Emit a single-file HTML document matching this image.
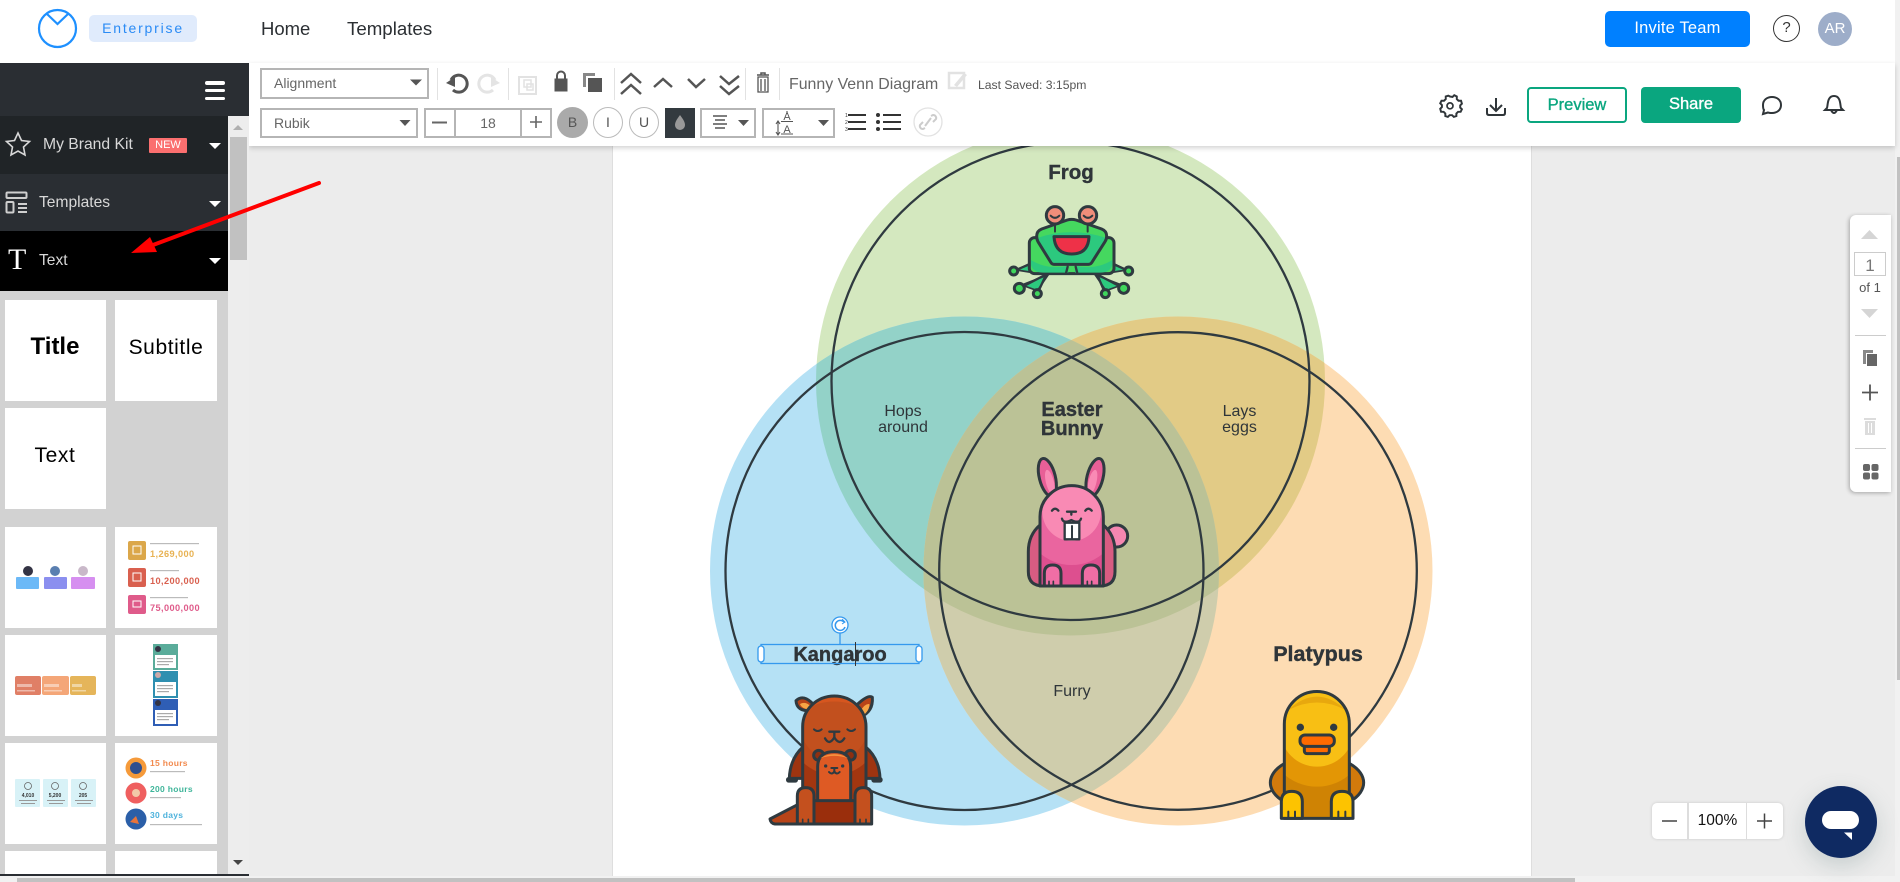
<!DOCTYPE html>
<html><head><meta charset="utf-8"><style>
*{box-sizing:border-box}
html,body{margin:0;padding:0;width:1900px;height:882px;overflow:hidden;background:#ececec;font-family:"Liberation Sans",sans-serif}
.a{position:absolute}
.sel{position:absolute;border:2px solid #b5b5b5;background:#fff;color:#666;font-size:14px}
.t{position:absolute;white-space:nowrap}
</style></head><body>
<div class="a" style="left:612px;top:146px;width:920px;height:730px;background:#fff;border-left:1px solid #dedede;border-right:1px solid #dedede"></div>

<svg class="a" style="left:0;top:0" width="1900" height="882" viewBox="0 0 1900 882" font-family="Liberation Sans">
<defs>
<clipPath id="bun"><path d="M120,438V230A95,93 0 0 1 310,230V438Z"/></clipPath>
<clipPath id="kan"><path d="M188,580V350A95,92 0 0 1 378,350V580Z"/></clipPath>
<clipPath id="pla"><path d="M133,565V282A97,97 0 0 1 328,282V565Z"/></clipPath>
<clipPath id="frg"><path d="M185,237L262,210Q275,206 288,210L365,237Q380,243 380,258Q380,268 375,275L335,338Q332,343 325,343H222Q216,343 213,338L174,275Q170,268 170,258Q170,243 185,237Z"/></clipPath>
<clipPath id="cg"><circle cx="1070.5" cy="381" r="254.500"/></clipPath>
<clipPath id="cb"><circle cx="964.5" cy="571" r="254.500"/></clipPath>
<clipPath id="co"><circle cx="1178" cy="571" r="254.500"/></clipPath>
</defs>
<circle cx="1070.5" cy="381" r="254.500" fill="#d4e8bf"/>
<circle cx="964.5" cy="571" r="254.500" fill="#b5e1f5"/>
<circle cx="1178" cy="571" r="254.500" fill="#fddcb3"/>
<circle cx="964.5" cy="571" r="254.500" fill="#93d2c8" clip-path="url(#cg)"/>
<circle cx="1178" cy="571" r="254.500" fill="#e2cb86" clip-path="url(#cg)"/>
<circle cx="1178" cy="571" r="254.500" fill="#cfcdac" clip-path="url(#cb)"/>
<g clip-path="url(#cg)"><circle cx="964.5" cy="571" r="254.500" fill="#bbc296" clip-path="url(#co)"/></g>
<g fill="none" stroke="#2f3a40" stroke-width="2.300">
<circle cx="1070.5" cy="381" r="239"/><circle cx="964.5" cy="571" r="239"/><circle cx="1178" cy="571" r="238.800"/>
</g>
<g fill="#2f3539" text-anchor="middle">
<g stroke="#2f3539" stroke-width=".4">
<text x="1071" y="179" font-size="20.5" font-weight="700">Frog</text>
<text x="1072" y="416" font-size="20" font-weight="700">Easter</text>
<text x="1072" y="435" font-size="20" font-weight="700">Bunny</text>
<text x="840" y="661" font-size="20" font-weight="700">Kangaroo</text>
<text x="1318" y="661" font-size="21.500" font-weight="700">Platypus</text>
</g>
<text x="903" y="416" font-size="16">Hops</text><text x="903" y="432" font-size="16">around</text>
<text x="1239.5" y="416" font-size="16">Lays</text><text x="1239.5" y="432" font-size="16">eggs</text>
<text x="1072" y="696" font-size="16">Furry</text>
</g>
<g fill="#fff" stroke="#3499ee" stroke-width="1.3">
<rect x="761" y="644.5" width="158" height="19" fill="none"/>
<path d="M840,633V644" fill="none"/>
<rect x="758" y="646" width="6" height="16" rx="3"/><rect x="916" y="646" width="6" height="16" rx="3"/>
<circle cx="840" cy="625" r="8"/>
<path d="M844,622A5,5 0 1 0 845,627" fill="none" stroke-width="1.5"/><path d="M842,619L845,622L842,624" fill="none" stroke-width="1"/>
</g>
<path d="M855.5,642V666" stroke="#333" stroke-width="1"/>

<!-- Frog -->
<g transform="translate(980 150) scale(.33333)" stroke="#2f3a40" stroke-width="9" stroke-linejoin="round" stroke-linecap="round">
<path d="M205,374L125,405L172,422ZM345,374L425,405L378,422Z" fill="#2cc97e" stroke-width="5"/>
<path d="M155,338L110,360L185,372ZM395,338L440,360L365,372Z" fill="#2cc97e" stroke-width="5"/>
<path d="M155,340L101,363M195,375L118,415M198,375L172,431M352,375L376,431M355,375L431,415M395,340L446,363" fill="none" stroke-width="7"/>
<circle cx="101" cy="363" r="12" fill="#3fd65c"/><circle cx="118" cy="415" r="15" fill="#3fd65c"/><circle cx="172" cy="431" r="12" fill="#3fd65c"/><circle cx="376" cy="431" r="12" fill="#3fd65c"/><circle cx="431" cy="415" r="15" fill="#3fd65c"/><circle cx="446" cy="363" r="12" fill="#3fd65c"/>
<rect x="148" y="263" width="254" height="108" rx="16" fill="#45d85f"/>
<path d="M153,330Q200,360 265,348V368H190Q160,368 153,345ZM397,330Q350,360 285,348V368H360Q390,368 397,345Z" fill="#2cc97e" stroke="none"/>
<path d="M263,350L258,370M287,350L292,370" fill="none" stroke-width="7"/>
<g clip-path="url(#frg)" stroke="none"><rect x="160" y="200" width="230" height="150" fill="#2cc97e"/><path d="M160,200H390V268Q275,225 160,268Z" fill="#45d85f"/></g>
<path d="M185,237L262,210Q275,206 288,210L365,237Q380,243 380,258Q380,268 375,275L335,338Q332,343 325,343H222Q216,343 213,338L174,275Q170,268 170,258Q170,243 185,237Z" fill="none"/>
<circle cx="225" cy="196" r="26" fill="#f08d7a"/><circle cx="324" cy="196" r="26" fill="#f08d7a"/>
<path d="M212,197Q225,210 238,197M311,197Q324,210 337,197" fill="none" stroke-width="6"/>
<path d="M225,226V245M323,226V245" fill="none" stroke-width="6"/>
<path d="M222,260H327Q325,312 275,312Q225,312 222,260Z" fill="#ee3148"/>
</g>

<!-- Bunny -->
<g transform="translate(1000 440) scale(.33333)" stroke="#2f3a40" stroke-width="9" stroke-linejoin="round" stroke-linecap="round">
<g transform="rotate(-14 142 112)"><ellipse cx="142" cy="112" rx="24" ry="58" fill="#e85f97"/><ellipse cx="146" cy="128" rx="12" ry="38" fill="#f98ab5" stroke="none"/></g>
<g transform="rotate(14 285 112)"><ellipse cx="285" cy="112" rx="24" ry="58" fill="#e85f97"/><ellipse cx="281" cy="128" rx="12" ry="38" fill="#f98ab5" stroke="none"/></g>
<circle cx="350" cy="288" r="33" fill="#f587b1"/>
<path d="M120,255Q85,285 85,335V395Q85,438 130,438H300Q345,438 345,395V335Q345,285 310,255Z" fill="#d85c82"/>
<g clip-path="url(#bun)" stroke="none"><rect x="100" y="130" width="230" height="320" fill="#dd4f8f"/><circle cx="215" cy="230" r="145" fill="#ea659f"/><circle cx="215" cy="215" r="88" fill="#f98ab4"/></g>
<path d="M120,438V230A95,93 0 0 1 310,230V438Z" fill="none"/>
<path d="M133,438V400Q133,375 158,375Q183,375 183,400V438Z" fill="#f06ea5"/><path d="M247,438V400Q247,375 273,375Q299,375 299,400V438Z" fill="#f06ea5"/>
<path d="M147,424V436M160,424V436M262,424V436M275,424V436" fill="none" stroke-width="5"/>
<path d="M156,212Q165,200 175,212M256,212Q265,200 275,212M201,215H228M214,215V224M186,236Q190,252 214,240Q238,252 243,236" fill="none" stroke-width="7"/>
<rect x="194" y="248" width="44" height="50" fill="#fff" stroke-width="7"/><path d="M216,258V298" stroke-width="6"/>
</g>

<!-- Kangaroo -->
<g transform="translate(740 610) scale(.33333)" stroke="#2f3a40" stroke-width="9" stroke-linejoin="round" stroke-linecap="round">
<path d="M90,627L175,583L235,642H105Q92,640 90,627Z" fill="#b84418"/>
<path d="M190,410Q150,445 148,505H192ZM376,410Q418,445 420,505H376Z" fill="#9e3410"/>
<rect x="140" y="503" width="32" height="13" rx="6" fill="#2f3a40" stroke-width="4"/><rect x="396" y="503" width="30" height="13" rx="6" fill="#2f3a40" stroke-width="4"/>
<path d="M212,302Q170,305 168,272Q190,250 222,285Z" fill="#b84418"/>
<path d="M212,300Q184,296 180,282Q198,272 215,292Z" fill="#f7a545" stroke="none"/>
<path d="M350,285Q385,252 397,262Q400,305 362,320Z" fill="#b84418"/>
<path d="M360,305Q374,280 388,282Q390,300 368,318Z" fill="#f7a545" stroke="none"/>
<g clip-path="url(#kan)" stroke="none"><rect x="180" y="250" width="205" height="340" fill="#a23610"/><circle cx="283" cy="360" r="135" fill="#bc4a1b"/><circle cx="283" cy="350" r="100" fill="#c2501e"/><path d="M188,345A95,92 0 0 1 378,345V300H188Z" fill="#c2501e"/><path d="M200,300A95,70 0 0 1 366,300A95,50 0 0 0 200,300Z" fill="#d6561f"/></g>
<path d="M188,580V350A95,92 0 0 1 378,350V580Z" fill="none"/>
<path d="M222,358Q233,368 245,358M322,358Q334,368 345,358" fill="none" stroke-width="6"/>
<path d="M268,365H298M283,365V382M255,385Q268,408 283,382Q298,408 313,385" fill="none" stroke-width="7"/>
<circle cx="236" cy="436" r="15" fill="#8f2f10"/><circle cx="331" cy="436" r="15" fill="#8f2f10"/>
<path d="M233,575V470Q233,425 283,425Q332,425 332,470V575Z" fill="#de5a24"/>
<path d="M240,445Q283,420 325,445Q283,430 240,445Z" fill="#f6923f" stroke="none"/>
<circle cx="257" cy="468" r="5" fill="#2f3a40" stroke="none"/><circle cx="308" cy="468" r="5" fill="#2f3a40" stroke="none"/>
<path d="M274,474H292M283,474V484M267,486Q276,496 283,484Q290,496 299,486" fill="none" stroke-width="6"/>
<rect x="222" y="572" width="123" height="70" fill="#9a2e0c"/>
<path d="M172,642V558Q172,533 197,533Q222,533 222,558V642Z" fill="#c4501e"/>
<path d="M345,642V558Q345,533 370,533Q395,533 395,558V642Z" fill="#c4501e"/>
<path d="M188,628V640M205,628V640M360,628V640M378,628V640" fill="none" stroke-width="5"/>
</g>

<!-- Platypus -->
<g transform="translate(1240 630) scale(.33333)" stroke="#2f3a40" stroke-width="9" stroke-linejoin="round" stroke-linecap="round">
<ellipse cx="231" cy="458" rx="140" ry="80" fill="#d27a0c"/>
<g clip-path="url(#pla)" stroke="none"><rect x="125" y="180" width="210" height="390" fill="#cf8304"/><circle cx="231" cy="320" r="150" fill="#e39605"/><circle cx="231" cy="300" r="110" fill="#f8bf14"/><path d="M125,180H335V300L125,300Z" fill="#f8bf14"/><path d="M145,240Q231,160 317,240Q231,195 145,240Z" fill="#e8a80e"/></g>
<path d="M133,565V282A97,97 0 0 1 328,282V565Z" fill="none"/>
<circle cx="181" cy="292" r="11" fill="#2f3a40" stroke="none"/><circle cx="281" cy="292" r="11" fill="#2f3a40" stroke="none"/>
<rect x="193" y="345" width="75" height="26" rx="8" fill="#ff6a00"/>
<rect x="180" y="315" width="103" height="34" rx="15" fill="#ff6a00"/>
<path d="M124,565V515Q124,484 155,484Q187,484 187,515V565Z" fill="#fdc300"/>
<path d="M274,565V515Q274,484 306,484Q339,484 339,515V565Z" fill="#fdc300"/>
<path d="M145,545V563M165,545V563M295,545V563M316,545V563" fill="none" stroke-width="6"/>
</g>
</svg>

<!-- Top nav -->
<div class="a" style="left:0;top:0;width:1895px;height:63px;background:#fff;box-shadow:0 1px 3px rgba(0,0,0,.1)"></div>
<div class="a" style="left:1895px;top:0;width:5px;height:882px;background:#f1f1f1"></div>
<div class="a" style="left:1897px;top:157px;width:3px;height:523px;background:#c1c1c1"></div>
<svg class="a" style="left:35px;top:8px" width="46" height="42" viewBox="35 8 46 42"><circle cx="57.5" cy="28.5" r="18.5" fill="none" stroke="#1e90ff" stroke-width="2.2"/><path d="M47,14L57.5,24L68,14" fill="none" stroke="#1e90ff" stroke-width="2.2"/></svg>
<div class="a" style="left:89px;top:15px;width:108px;height:27px;background:#e0ebfc;border-radius:5px;color:#2a8bf5;font-size:14px;line-height:27px;text-align:center;letter-spacing:1.8px">Enterprise</div>
<div class="t" style="left:261px;top:18px;font-size:18.5px;color:#2b2f33">Home</div>
<div class="t" style="left:347px;top:18px;font-size:18.700px;color:#2b2f33">Templates</div>
<div class="a" style="left:1605px;top:11px;width:145px;height:36px;background:#0080ff;border-radius:5px;color:#fff;font-size:16.500px;letter-spacing:.2px;line-height:35px;text-align:center">Invite Team</div>
<div class="a" style="left:1773px;top:15px;width:27px;height:27px;border:1.5px solid #333;border-radius:50%;text-align:center;font-size:15px;line-height:24px;color:#333">?</div>
<div class="a" style="left:1818px;top:12px;width:34px;height:34px;background:#9dadc9;border-radius:50%;text-align:center;font-size:15px;line-height:34px;color:#fff">AR</div>

<!-- Toolbar -->
<div class="a" style="left:249px;top:63px;width:1646px;height:83px;background:#fff;box-shadow:0 2px 5px rgba(0,0,0,.18)"></div>
<div class="sel" style="left:260px;top:68px;width:169px;height:31px;line-height:27px;padding-left:12px">Alignment</div>
<div class="sel" style="left:260px;top:108px;width:158px;height:30px;line-height:26px;padding-left:12px">Rubik</div>
<div class="sel" style="left:424px;top:108px;width:128px;height:30px;line-height:26px;text-align:center">18</div>
<div class="a" style="left:454px;top:108px;width:2px;height:30px;background:#b5b5b5"></div>
<div class="a" style="left:520px;top:108px;width:2px;height:30px;background:#b5b5b5"></div>
<div class="a" style="left:557px;top:107px;width:31px;height:31px;border-radius:50%;background:#aaa;color:#555;font-size:14px;line-height:31px;text-align:center">B</div>
<div class="a" style="left:593px;top:107px;width:30px;height:31px;border-radius:50%;border:1.5px solid #bbb;background:#fff;color:#555;font-size:14px;line-height:28px;text-align:center">I</div>
<div class="a" style="left:629px;top:107px;width:30px;height:31px;border-radius:50%;border:1.5px solid #bbb;background:#fff;color:#555;font-size:14px;line-height:28px;text-align:center">U</div>
<div class="a" style="left:665px;top:108px;width:30px;height:30px;background:#333a3f"></div>
<div class="sel" style="left:700px;top:108px;width:56px;height:30px"></div>
<div class="sel" style="left:762px;top:108px;width:73px;height:30px"></div>
<div class="t" style="left:789px;top:76px;font-size:15.9px;color:#666">Funny Venn Diagram</div>
<div class="t" style="left:978px;top:78px;font-size:12.2px;color:#555">Last Saved: 3:15pm</div>
<svg class="a" style="left:249px;top:63px" width="720" height="83" viewBox="249 63 720 83" fill="#666" font-family="Liberation Sans">
<g stroke="#e2e2e2" stroke-width="1"><path d="M437.5,68V100M508.5,68V100M614.5,68V100M745.5,68V100M779.5,68V100"/></g>
<path d="M410,79.500h12l-6,6z" fill="#555"/>
<path d="M399.500,120h11l-5.500,6z" fill="#555"/>
<path d="M432,122.500h15" stroke="#666" stroke-width="2" fill="none"/>
<path d="M530,122h12M536,116v12" stroke="#666" stroke-width="1.600" fill="none"/>
<path d="M818,120h11l-5.500,6z" fill="#555"/>
<path d="M738,120h11l-5.500,6z" fill="#555"/>
<path d="M713,116h14M715,120h10M713,124h14M715,128h10" stroke="#555" stroke-width="1.500" fill="none"/>
<g transform="translate(0 -2)"><path d="M451,82A8.500,8.500 0 1 1 453,92" fill="none" stroke="#555" stroke-width="3"/><path d="M446,85l9,-6v10z" fill="#555"/></g>
<g transform="translate(0 -2)"><path d="M495,82A8.500,8.500 0 1 0 493,92" fill="none" stroke="#e4e4e4" stroke-width="3"/><path d="M500,85l-9,-6v10z" fill="#e4e4e4"/></g>
<rect x="519" y="77" width="17" height="17" fill="none" stroke="#e2e2e2" stroke-width="2"/><rect x="524" y="80" width="7" height="7" fill="none" stroke="#e2e2e2" stroke-width="1.500"/><rect x="527" y="84" width="6" height="6" fill="none" stroke="#e2e2e2" stroke-width="1.500"/>
<g transform="translate(0 1.500)"><path d="M557,78v-4a4,4 0 0 1 8,0v4" fill="none" stroke="#555" stroke-width="2"/><rect x="554.500" y="77" width="13" height="13" fill="#555"/></g>
<path d="M583,73h12v3h-9v11h-3z" fill="#888"/><rect x="588" y="78" width="14" height="14" fill="#555"/>
<g fill="none" stroke="#555" stroke-width="2.500" transform="translate(0 2)"><path d="M621,81l10,-9l10,9M621,92l10,-9l10,9M654,85l9,-8l9,8M688,77l8,8l9,-8M720,74l9,8l10,-8M720,84l9,8l10,-8"/></g>
<path d="M757,75h12M761,75v-2h4v2" stroke="#555" stroke-width="1.500" fill="none"/><path d="M758,77h10v15h-10zM761,79v12M765,79v12" stroke="#555" stroke-width="1.300" fill="none"/>
<rect x="949" y="73" width="15" height="15" fill="none" stroke="#e2e2e2" stroke-width="2.500"/><path d="M954,85l10,-12l3,2l-10,12z" fill="#e2e2e2"/>
</svg>
<svg class="a" style="left:650px;top:100px" width="300" height="44" viewBox="650 100 300 44" font-family="Liberation Sans">
<path d="M680,115c3,4 5,7 5,10a5,5 0 0 1 -10,0c0,-3 2,-6 5,-10z" fill="#999"/>
<g fill="#555" font-size="11" text-anchor="middle"><text x="787" y="120">A</text><text x="787" y="133">A</text></g>
<g stroke="#555" fill="none" stroke-width="1.100"><path d="M781,121.500H793M781,134H793M787,111V114"/><path d="M778,122V134M776,124L778,121L780,124M776,132L778,135L780,132"/></g>
<g stroke="#333" stroke-width="2"><path d="M848,115H866M848,122H866M848,129H866M883,115H901M883,122H901M883,129H901"/></g>
<g fill="#333"><circle cx="878" cy="115" r="2"/><circle cx="878" cy="122" r="2"/><circle cx="878" cy="129" r="2"/></g>
<g fill="#333" font-size="5"><text x="845" y="117">1</text><text x="845" y="124">2</text><text x="845" y="131">3</text></g>
<circle cx="928" cy="122" r="14" fill="#fff" stroke="#e2e2e2" stroke-width="1.300"/>
<path d="M925,128l-2,1a3,3 0 0 1 -3,-4l3,-3M931,116l2,-1a3,3 0 0 1 3,4l-3,3M925,126l6,-8" fill="none" stroke="#ccc" stroke-width="2"/>
</svg>
<svg class="a" style="left:1430px;top:85px" width="420" height="45" viewBox="1430 85 420 45" fill="none" stroke="#2f3539" stroke-width="2">
<g transform="translate(1450 105) scale(.85) translate(-1450 -105)"><circle cx="1450" cy="106" r="3.500"/><path d="M1450,96.500l3,.5l2,-2l3,1.500l0,3l2,2l3,0l1,3.500l-2,2l0,2.500l2,2l-1.500,3l-3,0l-2,2l0,3l-3,1l-2,-2l-3,0l-2,2l-3,-1l0,-3l-2,-2l-3,0l-1,-3.500l2,-2l0,-2.500l-2,-2l1.500,-3l3,0l2,-2l0,-3l3,-1z" transform="translate(0 -1.500)" stroke-width="2.300"/></g>
<path d="M1496,98V111M1490,105l6,6l6,-6M1487,108v5q0,2 2,2h14q2,0 2,-2v-5"/>
<path d="M1772,97c5,0 9,3 9,8s-4,8 -9,8c-2,0 -3,0 -4,-.5l-5,1.500l1,-4c-1,-1 -1,-3 -1,-5c0,-5 4,-8 9,-8z"/>
<path d="M1827,108c1,-3 0,-12 7,-12c7,0 6,9 7,12l2,2h-18zM1831,110q3,6 6,0"/>
</svg>
<div class="a" style="left:1527px;top:87px;width:100px;height:36px;border:2px solid #0aa67f;border-radius:4px;color:#0aa67f;font-size:16.500px;line-height:32px;text-align:center;-webkit-text-stroke:.35px #0aa67f;background:#fff">Preview</div>
<div class="a" style="left:1641px;top:87px;width:100px;height:36px;background:#0aa67f;border-radius:4px;color:#fff;font-size:16.500px;line-height:35px;text-align:center;-webkit-text-stroke:.35px #fff">Share</div>

<!-- Sidebar -->
<div class="a" style="left:0;top:63px;width:249px;height:53px;background:#2a2e33"></div>
<div class="a" style="left:205px;top:81px;width:20px;height:3.500px;background:#fff;border-radius:2px"></div>
<div class="a" style="left:205px;top:88.500px;width:20px;height:3.500px;background:#fff;border-radius:2px"></div>
<div class="a" style="left:205px;top:96.500px;width:20px;height:3.500px;background:#fff;border-radius:2px"></div>
<div class="a" style="left:0;top:116px;width:228px;height:58px;background:#202427"></div>
<div class="a" style="left:0;top:174px;width:228px;height:57px;background:#2a2e33"></div>
<div class="a" style="left:0;top:231px;width:228px;height:60px;background:#000"></div>
<div class="a" style="left:0;top:291px;width:228px;height:583px;background:#d2d2d2"></div>
<div class="a" style="left:228px;top:116px;width:21px;height:758px;background:#ededed"></div>
<div class="a" style="left:230px;top:137px;width:17px;height:123px;background:#c1c1c1"></div>
<div class="t" style="left:43px;top:136px;font-size:15.700px;color:#d8d8d8">My Brand Kit</div>
<div class="a" style="left:149px;top:138px;width:38px;height:15px;background:#fb6f6f;color:#fff;font-size:11px;line-height:15px;text-align:center;border-radius:1px">NEW</div>
<div class="t" style="left:39px;top:194px;font-size:15.600px;color:#d8d8d8">Templates</div>
<div class="t" style="left:39px;top:252px;font-size:15.600px;color:#d8d8d8">Text</div>
<div class="t" style="left:8px;top:243px;font-size:30px;font-family:'Liberation Serif',serif;color:#fff;line-height:34px">T</div>
<svg class="a" style="left:0;top:116px" width="249" height="180" viewBox="0 116 249 180">
<path d="M209,143h12l-6,6zM209,201h12l-6,6zM209,258h12l-6,6z" fill="#fff"/>
<path d="M233,130h10l-5,-5z" fill="#b0b0b0"/>
<path d="M18,133l3.500,7.500l8,1l-6,5.500l1.500,8l-7,-4l-7,4l1.500,-8l-6,-5.500l8,-1z" fill="none" stroke="#d8d8d8" stroke-width="1.600"/>
<g fill="none" stroke="#cfcfcf" stroke-width="2"><rect x="6.500" y="192.500" width="20" height="5.500" rx="1"/><rect x="6.500" y="202" width="7" height="10.500" rx="1"/><path d="M18,204H27M18,208H27M18,212H27"/></g>
</svg>
<svg class="a" style="left:0;top:291px" width="249" height="591" viewBox="0 291 249 591" font-family="Liberation Sans">
<g fill="#fff"><rect x="5" y="300" width="101" height="101"/><rect x="115" y="300" width="102" height="101"/><rect x="5" y="408" width="101" height="101"/>
<rect x="5" y="527" width="101" height="101"/><rect x="115" y="527" width="102" height="101"/><rect x="5" y="635" width="101" height="101"/><rect x="115" y="635" width="102" height="101"/><rect x="5" y="743" width="101" height="101"/><rect x="115" y="743" width="102" height="101"/><rect x="5" y="851" width="101" height="23"/><rect x="115" y="851" width="102" height="23"/></g>
<g text-anchor="middle" fill="#000"><text x="55" y="354" font-size="24" font-weight="700">Title</text><text x="166" y="354" font-size="21" letter-spacing=".6">Subtitle</text><text x="55" y="462" font-size="21" letter-spacing=".6">Text</text></g>
<circle cx="28" cy="571" r="5" fill="#334"/><circle cx="55" cy="571" r="5" fill="#5a7fb0"/><circle cx="83" cy="571" r="5" fill="#c9b8c9"/>
<rect x="16" y="577" width="23" height="12" rx="1" fill="#6cb9f7"/><rect x="44" y="577" width="23" height="12" rx="1" fill="#8b8fef"/><rect x="71" y="577" width="24" height="12" rx="1" fill="#d68ff0"/>
<rect x="128" y="541" width="18" height="19" rx="2" fill="#dba74a"/><rect x="128" y="568" width="18" height="19" rx="2" fill="#d9604f"/><rect x="128" y="595" width="18" height="19" rx="2" fill="#df5b8a"/>
<rect x="133" y="546" width="8" height="8" fill="none" stroke="#fff"/><rect x="133" y="573" width="8" height="8" fill="none" stroke="#fff"/><rect x="133" y="601" width="8" height="6" fill="none" stroke="#fff"/>
<g font-size="9.200" font-weight="700" letter-spacing=".4"><text x="150" y="557" fill="#e8b252">1,269,000</text><text x="150" y="584" fill="#d9604f">10,200,000</text><text x="150" y="611" fill="#df5b8a">75,000,000</text></g>
<g fill="#bbb"><rect x="150" y="543" width="49" height="1.200"/><rect x="150" y="570" width="29" height="1.200"/><rect x="150" y="597" width="38" height="1.200"/></g>
<rect x="15" y="676" width="26" height="19" rx="2" fill="#e07f66"/><rect x="42" y="676" width="27" height="19" rx="2" fill="#f4a678"/><rect x="70" y="676" width="26" height="19" rx="2" fill="#e5b55a"/>
<g fill="#fff" opacity=".45"><rect x="17" y="684" width="15" height="3"/><rect x="44" y="684" width="15" height="3"/><rect x="72" y="684" width="10" height="3"/><rect x="17" y="690" width="18" height="1.500"/><rect x="44" y="690" width="18" height="1.500"/><rect x="72" y="690" width="14" height="1.500"/></g>
<rect x="153" y="644" width="25" height="26" fill="#5aac9a"/><rect x="153" y="671" width="25" height="27" fill="#2f8fb0"/><rect x="153" y="699" width="25" height="27" fill="#2f5eb5"/>
<rect x="155" y="655" width="21" height="13" fill="#fff"/><rect x="155" y="682" width="21" height="14" fill="#fff"/><rect x="155" y="710" width="21" height="14" fill="#fff"/>
<g fill="#aaa"><rect x="157" y="658" width="16" height="1.200"/><rect x="157" y="661" width="16" height="1.200"/><rect x="157" y="664" width="12" height="1.200"/><rect x="157" y="685" width="16" height="1.200"/><rect x="157" y="688" width="16" height="1.200"/><rect x="157" y="691" width="12" height="1.200"/><rect x="157" y="713" width="16" height="1.200"/><rect x="157" y="716" width="16" height="1.200"/><rect x="157" y="719" width="12" height="1.200"/></g>
<circle cx="158" cy="649" r="3" fill="#334"/><circle cx="158" cy="675" r="3" fill="#caa"/><circle cx="158" cy="703" r="3" fill="#334"/>
<rect x="15" y="779" width="25" height="28" rx="1" fill="#d8f2f7"/><rect x="43" y="779" width="25" height="28" rx="1" fill="#d8f2f7"/><rect x="71" y="779" width="25" height="28" rx="1" fill="#d8f2f7"/>
<g font-size="5" font-weight="700" fill="#333" text-anchor="middle"><text x="28" y="797">4,010</text><text x="55" y="797">5,200</text><text x="83" y="797">205</text></g>
<g fill="none" stroke="#666" stroke-width=".8"><circle cx="28" cy="786" r="3.500"/><circle cx="55" cy="786" r="3.500"/><circle cx="83" cy="786" r="3.500"/></g>
<g fill="#999"><rect x="19" y="800" width="18" height="1"/><rect x="47" y="800" width="18" height="1"/><rect x="75" y="800" width="18" height="1"/><rect x="21" y="803" width="14" height="1"/><rect x="49" y="803" width="14" height="1"/><rect x="77" y="803" width="14" height="1"/></g>
<circle cx="136" cy="768" r="10.500" fill="#f59a3a"/><circle cx="136" cy="768" r="6" fill="#2f4f8f"/><circle cx="136" cy="793" r="10.500" fill="#ef5f5f"/><circle cx="136" cy="793" r="4" fill="#f2c9a8"/><circle cx="136" cy="819" r="10.500" fill="#2b5fa8"/><path d="M130,822l6,-6l3,8z" fill="#e8743b"/>
<g font-size="8.500" font-weight="700" letter-spacing=".3"><text x="150" y="766" fill="#f28a4e">15 hours</text><text x="150" y="792" fill="#3fb59a">200 hours</text><text x="150" y="818" fill="#4db2dc">30 days</text></g>
<g fill="#bbb"><rect x="150" y="771" width="35" height="1.200"/><rect x="150" y="797" width="31" height="1.200"/><rect x="150" y="824" width="52" height="1.200"/></g>
<path d="M233,860h10l-5,5z" fill="#444"/>
</svg>
<div class="a" style="left:0;top:874px;width:249px;height:2px;background:#2a2e33"></div>
<div class="a" style="left:0;top:876px;width:1895px;height:6px;background:#f1f1f1"></div>
<div class="a" style="left:17px;top:878px;width:1558px;height:4px;background:#c1c1c1"></div>

<!-- Red arrow -->
<svg class="a" style="left:120px;top:170px" width="210" height="90" viewBox="120 170 210 90"><path d="M319,183L153,245" stroke="#f00" stroke-width="4" stroke-linecap="round"/><path d="M131,253L150,237L157,252Z" fill="#f00"/></svg>

<!-- Page control -->
<div class="a" style="left:1850px;top:215px;width:41px;height:277px;background:#fff;border-radius:6px 0 0 6px;box-shadow:-1px 1px 4px rgba(0,0,0,.3)"></div>
<svg class="a" style="left:1850px;top:215px" width="41" height="277" viewBox="1850 215 41 277">
<path d="M1861,239h17l-8.500,-9zM1861,309h17l-8.500,9z" fill="#d5d5d5"/>
<rect x="1854.500" y="252.500" width="31" height="23" fill="#fff" stroke="#ccc"/>
<text x="1870" y="271" font-size="17" fill="#777" text-anchor="middle" font-family="Liberation Sans">1</text>
<text x="1870" y="292" font-size="13" fill="#555" text-anchor="middle" font-family="Liberation Sans">of 1</text>
<path d="M1855,335.500H1886M1855,448.500H1886" stroke="#ccc"/>
<path d="M1863,350h10v3h-7v11h-3z" fill="#888"/><rect x="1867" y="354" width="10" height="12" fill="#666"/>
<path d="M1862,392.500H1878M1870,384.500V400.500" stroke="#555" stroke-width="1.800"/>
<path d="M1864,418h12v2h-12zM1865,421h10v14h-10z" fill="#dcdcdc"/><path d="M1868.500,423v10M1871.500,423v10" stroke="#fff"/>
<g fill="#666"><rect x="1863" y="464" width="7" height="7" rx="2"/><rect x="1871.500" y="464" width="7" height="7" rx="2"/><rect x="1863" y="472.500" width="7" height="7" rx="2"/><rect x="1871.500" y="472.500" width="7" height="7" rx="2"/></g>
</svg>

<!-- Zoom -->
<div class="a" style="left:1652px;top:803px;width:131px;height:36px;background:#fff;border-radius:5px;box-shadow:0 0 3px rgba(0,0,0,.15)"></div>
<div class="a" style="left:1687px;top:803px;width:2px;height:36px;background:#ddd"></div>
<div class="a" style="left:1746px;top:803px;width:1px;height:36px;background:#ddd"></div>
<div class="t" style="left:1689px;top:812px;width:57px;text-align:center;font-size:15.500px;color:#111">100%</div>
<svg class="a" style="left:1652px;top:803px" width="131" height="36" viewBox="1652 803 131 36"><path d="M1662,821H1677M1757,821H1772M1764.500,813.500V828.500" stroke="#444" stroke-width="1.500"/></svg>

<!-- Chat -->
<div class="a" style="left:1805px;top:786px;width:72px;height:72px;border-radius:50%;background:#0f2a62;box-shadow:0 8px 22px rgba(90,120,120,.25)"></div>
<div class="a" style="left:1822px;top:811px;width:37px;height:18px;border-radius:9px;background:#fff"></div>
<svg class="a" style="left:1840px;top:828px" width="20" height="14" viewBox="1840 828 20 14"><path d="M1844,832.500H1852V840Z" fill="#fff"/></svg>
</body></html>
